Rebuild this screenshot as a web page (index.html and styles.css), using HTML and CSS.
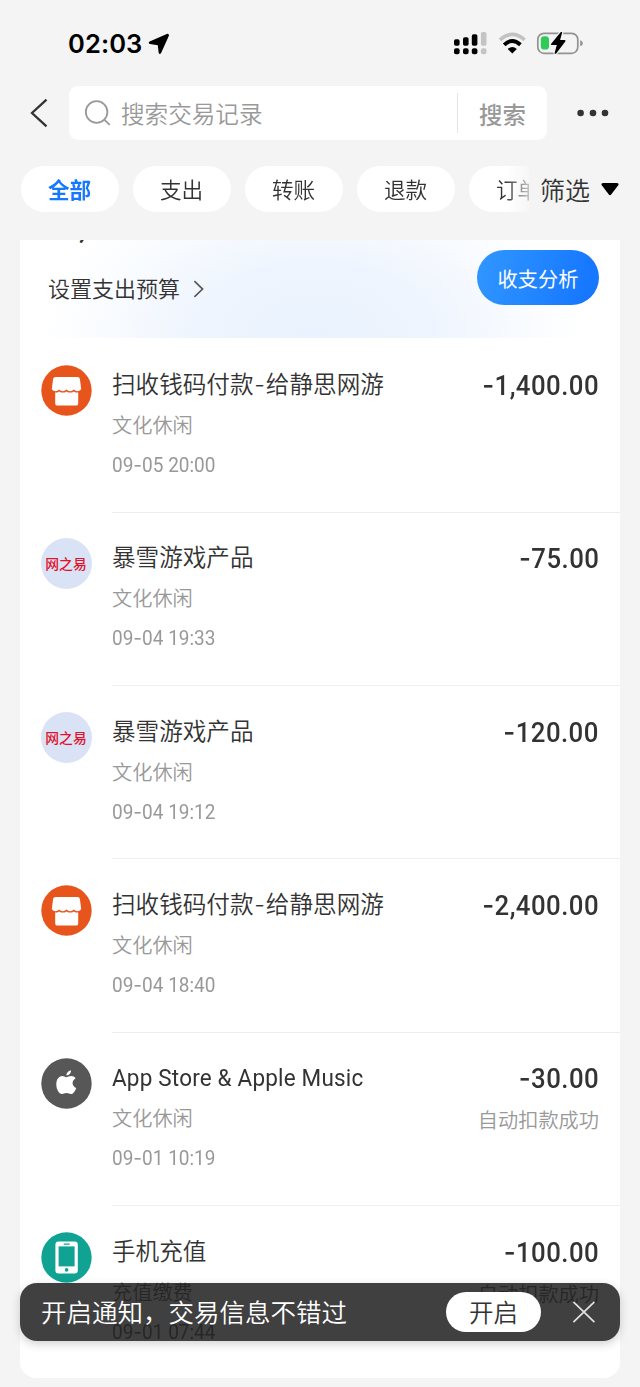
FILE: index.html
```html
<!DOCTYPE html>
<html lang="zh-CN">
<head>
<meta charset="utf-8">
<title>账单</title>
<link rel="stylesheet" href="styles.css">
</head>
<body>
<svg width="0" height="0" class="defs">
  <symbol id="shop" viewBox="0 0 51 51">
    <circle cx="25.5" cy="25.5" r="25.2" fill="#e8551c"/>
    <path d="M14.5 12h22q2 0 2.4 2l1.3 10.2q-1.6 2-3.7 2-2.2 0-3.6-1.6-1.7 1.6-3.7 1.6t-3.7-1.6q-1.7 1.6-3.7 1.6t-3.7-1.6q-1.4 1.6-3.6 1.6-2.1 0-3.7-2L12.1 14q.4-2 2.4-2z" fill="#fff"/>
    <path d="M14.2 27.6q2.6 0 4.1-1.2 1.6 1.2 3.6 1.2t3.7-1.2q1.6 1.2 3.6 1.2t3.7-1.2q1.5 1.2 4.3 1.2v10.8q0 2.2-2.2 2.2H16.4q-2.2 0-2.2-2.2z" fill="#fff"/>
  </symbol>
</svg>
<div class="screen">
  <header class="status">
    <div class="clock">02:03
      <svg width="22" height="22" viewBox="0 0 22 22"><path d="M18.8.9 1.6 8.4Q-.4 10 2 11l7.8 1.2.9 7.8q1 2 2.4.1L20.9 2.8q.3-2.6-2.1-1.9z"/></svg>
    </div>
    <div class="indicators">
      <svg width="34" height="24" viewBox="0 0 34 24">
        <g fill="#000"><rect x="1" y="7.2" width="5.6" height="6.6" rx="1.8"/><rect x="10" y="5.2" width="5.6" height="8.6" rx="1.8"/><rect x="18.8" y="2.2" width="5.6" height="11.6" rx="1.8"/><rect x="1" y="16.2" width="5.6" height="6" rx="2"/><rect x="10" y="16.2" width="5.6" height="6" rx="2"/><rect x="18.8" y="16.2" width="5.6" height="6" rx="2"/></g>
        <g fill="#c4c4c4"><rect x="27.9" y="0" width="5.6" height="13.8" rx="1.8"/><rect x="27.9" y="16.2" width="5.6" height="6" rx="2"/></g>
      </svg>
      <svg class="wifi" width="29" height="24" viewBox="0 0 29 24" fill="none">
        <path d="M2 7.8Q14.2-3 26.6 7.8" stroke="#c2c2c2" stroke-width="3.6"/>
        <path d="M6.2 12.8Q14.2 5.2 22.4 12.8" stroke="#000" stroke-width="3.9"/>
        <path d="M9.8 17q4.5-4 9 0l-4.5 4.4z" fill="#000"/>
      </svg>
      <svg class="battery" width="48" height="24" viewBox="0 0 48 24">
        <rect x="1.8" y="1.3" width="40" height="20" rx="6.2" fill="none" stroke="#929292" stroke-width="1.7"/>
        <path d="M44.2 8.2q2.6.7 2.6 3t-2.6 3z" fill="#929292"/>
        <rect x="4.8" y="4.2" width="8.2" height="13.4" rx="3.4" fill="#30ca58"/>
        <path d="M24.6.3 15.2 11.7q-.7 1.4 1 1.4h4.6l-2.2 7.8q.2 1.6 1.6.5l9.1-12q.7-1.4-1-1.4h-4.2l2-7.2q-.2-1.6-1.5-.5z" fill="#000" stroke="#f4f4f4" stroke-width="2.4" paint-order="stroke"/>
      </svg>
    </div>
  </header>

  <nav class="navbar">
    <svg class="back" width="20" height="30" viewBox="0 0 20 30"><path d="M17.5 1.6 3 15l14.5 13.4" fill="none" stroke="#333" stroke-width="2.3"/></svg>
    <div class="search">
      <svg width="28" height="28" viewBox="0 0 28 28" fill="none" stroke="#999" stroke-width="1.8"><circle cx="12.6" cy="13" r="10.8"/><path d="m20.4 20.8 5.4 5"/></svg>
      <span class="placeholder">搜索交易记录</span>
      <span class="search-btn">搜索</span>
    </div>
    <svg class="more" width="32" height="8" viewBox="0 0 32 8" fill="#333"><circle cx="3.6" cy="4" r="3.3"/><circle cx="16" cy="4" r="3.3"/><circle cx="28" cy="4" r="3.3"/></svg>
  </nav>

  <div class="filters">
    <div class="chips">
      <span class="chip active">全部</span><span class="chip">支出</span><span class="chip">转账</span><span class="chip">退款</span><span class="chip">订单</span>
    </div>
    <div class="filter"><span>筛选</span><svg width="18" height="13" viewBox="0 0 18 13"><path d="M2 0h14q2.4.3 1.2 2.2L10.2 11.6q-1.2 1.2-2.4 0L.8 2.2Q-.4.3 2 0z"/></svg></div>
  </div>

  <main class="card">
    <section class="summary">
      <div class="total"><span>,</span></div>
      <div class="budget">设置支出预算<svg width="12" height="18" viewBox="0 0 12 18"><path d="m1.4 1.2 8.2 7.9-8.2 7.7" fill="none" stroke="#555" stroke-width="1.6"/></svg></div>
      <div class="analysis">收支分析</div>
    </section>
    <ul class="list">
      <li class="row">
        <svg class="icon"><use href="#shop"/></svg>
        <div class="body"><div class="info"><div class="title">扫收钱码付款<span class="dash">-</span>给静思网游</div><div class="cat">文化休闲</div><div class="date">09<i>-</i>05 20:00</div></div><div class="side"><div class="amount"><i>-</i>1,400.00</div></div></div>
      </li>
      <li class="row">
        <div class="icon brand">网之易</div>
        <div class="body"><div class="info"><div class="title">暴雪游戏产品</div><div class="cat">文化休闲</div><div class="date">09<i>-</i>04 19:33</div></div><div class="side"><div class="amount"><i>-</i>75.00</div></div></div>
      </li>
      <li class="row">
        <div class="icon brand">网之易</div>
        <div class="body"><div class="info"><div class="title">暴雪游戏产品</div><div class="cat">文化休闲</div><div class="date">09<i>-</i>04 19:12</div></div><div class="side"><div class="amount"><i>-</i>120.00</div></div></div>
      </li>
      <li class="row">
        <svg class="icon"><use href="#shop"/></svg>
        <div class="body"><div class="info"><div class="title">扫收钱码付款<span class="dash">-</span>给静思网游</div><div class="cat">文化休闲</div><div class="date">09<i>-</i>04 18:40</div></div><div class="side"><div class="amount"><i>-</i>2,400.00</div></div></div>
      </li>
      <li class="row">
        <svg class="icon" viewBox="0 0 51 51"><circle cx="25.5" cy="25.5" r="25.2" fill="#575757"/><path d="M25.3 17.6q.2-4 4.7-5.4.2 4.4-4.7 5.4z" fill="#fff"/><path d="M25.2 19.2c1.5 0 2.9-1.2 5.1-1.2 1.7 0 3.3.9 4.3 2.2-4.5 2.8-3.6 8 .6 9.7-1 3.2-3 6.2-5.2 6.2-1.7 0-2.3-1-4.5-1s-2.9 1-4.5 1c-3 0-5.7-5-5.7-9.6 0-5.4 3-8.4 6-8.4 1.7 0 2.6 1.1 3.9 1.1z" fill="#fff"/></svg>
        <div class="body"><div class="info"><div class="title latin">App Store &amp; Apple Music</div><div class="cat">文化休闲</div><div class="date">09<i>-</i>01 10:19</div></div><div class="side"><div class="amount"><i>-</i>30.00</div><div class="note">自动扣款成功</div></div></div>
      </li>
      <li class="row">
        <svg class="icon" viewBox="0 0 51 51"><circle cx="25.5" cy="25.5" r="25.2" fill="#10a394"/><rect x="14.4" y="9.6" width="22.4" height="31.8" rx="3.2" fill="#fff"/><rect x="17.6" y="14.4" width="16" height="20" fill="#10a394"/><path d="M23.2 12.2h5" stroke="#10a394" stroke-width="1.3" stroke-linecap="round"/><circle cx="25.6" cy="37.9" r="1.8" fill="#10a394"/></svg>
        <div class="body"><div class="info"><div class="title">手机充值</div><div class="cat">充值缴费</div><div class="date">09<i>-</i>01 07:44</div></div><div class="side"><div class="amount"><i>-</i>100.00</div><div class="note">自动扣款成功</div></div></div>
      </li>
    </ul>
  </main>

  <div class="toast">
    <span class="toast-text">开启通知，交易信息不错过</span>
    <span class="toast-btn">开启</span>
    <svg width="24" height="24" viewBox="0 0 24 24"><path d="m1.4 1.8 21 20.4m0-20.4-21 20.4" stroke="#e2e2e2" stroke-width="1.7"/></svg>
  </div>
</div>
</body>
</html>
```
FILE: styles.css
```css
* { box-sizing: border-box; }
body { margin: 0; background: #f4f4f4; color: #333; font-family: Roboto, "Noto Sans CJK SC", sans-serif; font-weight: 350; }
svg { display: block; flex: none; }
.defs { position: absolute; }
.screen { position: relative; width: 640px; height: 1387px; overflow: hidden; background: #f4f4f4; white-space: nowrap; }

.status { display: flex; justify-content: space-between; height: 86px; padding: 29px 56px 0 68px; }
.clock { display: flex; gap: 6px; height: 30px; align-items: center; color: #000; font: 600 25.5px/30px Inter, sans-serif; letter-spacing: 0.1px; }
.indicators { display: flex; padding-top: 3px; height: 30px; }
.wifi { margin-left: 11px; }
.battery { margin-left: 9px; }

.navbar { display: flex; align-items: center; height: 54px; padding: 0 31px 0 29px; }
.search { display: flex; align-items: center; width: 478px; height: 54px; margin-left: 20px; padding-left: 15px; border-radius: 9px; background: #fff; color: #999; }
.placeholder { flex: 1; margin-left: 9px; font-size: 23.6px; line-height: 34px; padding-top: 3px; }
.search-btn { width: 90px; height: 40px; padding-left: 21px; border-left: 1.5px solid #e5e5e5; font-size: 23.4px; font-weight: 500; line-height: 46px; }
.more { margin-left: auto; }

.filters { display: flex; height: 100px; padding: 26px 0 0 21px; }
.chips { display: flex; gap: 14px; width: 508px; height: 46px; overflow: hidden; -webkit-mask-image: linear-gradient(90deg, #000 484px, rgba(0,0,0,.25) 508px); mask-image: linear-gradient(90deg, #000 484px, rgba(0,0,0,.25) 508px); }
.chip { flex: none; width: 98px; height: 46px; padding-right: 1px; border-radius: 23px; background: #fff; font-size: 21.6px; line-height: 50px; text-align: center; }
.active { color: #1677ff; font-weight: 700; }
.filter { display: flex; align-items: center; gap: 11px; height: 46px; margin-left: 11px; font-size: 25px; line-height: 46px; }
.filter span { padding-top: 5px; }
.filter svg { fill: #000; margin-top: 1px; }

.card { width: 600px; height: 1138px; margin-left: 20px; border-radius: 0 0 16px 16px; background: #fff; overflow: hidden; }
.summary { display: grid; grid-template-columns: 1fr auto; grid-template-rows: 10px 55px 1fr; height: 98px; padding: 0 21px 0 28px; background: radial-gradient(ellipse 270px 170px at 49% 100%, #e9f2fe 0%, #eff5fe 45%, #f8fbff 75%, #fff 100%); }
.total { grid-column: 1 / -1; height: 3px; overflow: hidden; padding-left: 31px; }
.total span { display: block; margin-top: -27.5px; font-size: 30px; font-weight: 500; line-height: 30px; }
.budget { display: flex; align-items: center; gap: 14px; height: 34px; margin: 23px 0 0 0; font-size: 22px; line-height: 34px; }
.budget svg { margin: -3px 0 0 -1px; }
.analysis { width: 122px; height: 55px; border-radius: 28px; background: linear-gradient(105deg, #3197ff, #1677ff 90%); color: #fff; font-size: 20.2px; font-weight: 400; line-height: 60px; text-align: center; }

.list { margin: 0; padding: 1px 0 0; list-style: none; }
.row { display: flex; height: 173.35px; padding: 26px 0 0 20.5px; }
.icon { width: 51px; height: 51px; flex: none; }
.brand { border-radius: 50%; background: #dae3f5; color: #e1122a; font-size: 13.8px; font-weight: 500; line-height: 52px; text-align: center; }
.body { display: flex; justify-content: space-between; flex: 1; height: 147.6px; margin-left: 20.5px; padding-right: 21px; border-bottom: 1px solid #eee; }
.row:last-child .body { border: 0; }
i, .dash { font-family: Inter, sans-serif; font-style: normal; }
.dash { display: inline-block; width: 12.3px; text-align: center; }
.title { height: 34px; margin-top: 3px; font-size: 23.6px; line-height: 34px; }
.latin { width: 0; font-weight: 400; letter-spacing: 0.2px; transform: scaleX(.953); transform-origin: left; }
.cat { height: 28px; margin-top: 10px; color: #999; font-size: 20.2px; line-height: 28px; }
.date { height: 28px; margin-top: 11px; color: #999; font-size: 19.8px; font-weight: 400; line-height: 28px; transform: scaleX(.96); transform-origin: left; }
.side { text-align: right; }
.amount { height: 34px; margin-top: 2px; font-size: 28px; font-weight: 500; line-height: 36px; letter-spacing: 0.5px; transform: scaleX(.92); transform-origin: right; }
.note { height: 28px; margin-top: 13px; color: #999; font-size: 20.2px; line-height: 28px; }

.toast { position: absolute; left: 20px; top: 1283px; display: flex; align-items: center; width: 600px; height: 58px; padding: 0 24px 0 21px; border-radius: 17px; background: rgba(0,0,0,.75); box-shadow: 0 3px 10px rgba(0,0,0,.18); color: #fff; font-size: 25.5px; }
.toast-text { flex: 1; line-height: 58px; padding-top: 2px; }
.toast-btn { width: 95px; height: 40px; margin-right: 31px; border-radius: 20px; background: #fff; color: #333; font-size: 24.5px; line-height: 43px; text-align: center; }
```
